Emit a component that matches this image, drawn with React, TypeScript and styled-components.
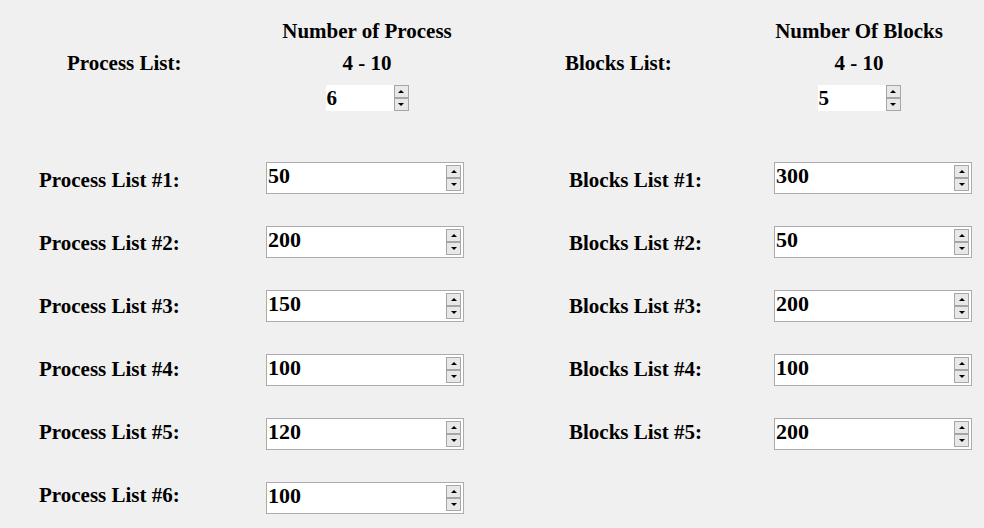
import React from "react";
import styled, { createGlobalStyle } from "styled-components";

const Global = createGlobalStyle`
  html, body { margin: 0; padding: 0; background: #f0f0f0; }
  body { font-family: "Liberation Serif", "Times New Roman", serif; color: #000; }
`;

const Page = styled.div`
  width: 984px;
  height: 528px;
  background: #f0f0f0;
  overflow: hidden;
  font-weight: bold;
  font-size: 21px;
`;

const Header = styled.div`
  display: grid;
  grid-template-columns: 200px 200px 98px 194px 200px;
  padding: 15px 0 0 67px;
`;

const HeaderLabel = styled.div`
  padding-top: 32px;
  line-height: 32px;
`;

const CountGroup = styled.div`
  display: flex;
  flex-direction: column;
  align-items: center;
`;

const CountLine = styled.div`
  line-height: 32px;
  white-space: nowrap;
`;

const SmallSpin = styled.div`
  margin-top: 6px;
  display: flex;
  width: 83px;
  height: 26px;
`;

const SmallField = styled.div`
  flex: 1;
  background: #fff;
  line-height: 26px;
  padding-left: 1px;
`;

const Buttons = styled.div`
  display: flex;
  flex-direction: column;
  width: 15px;
`;

const ArrowBtn = styled.div<{ $dir: "up" | "down" }>`
  flex: 1;
  border: 1px solid #a6a6a6;
  background: #e8e8e8;
  display: flex;
  align-items: center;
  justify-content: center;
  &::after {
    content: "";
    width: 0;
    height: 0;
    border-left: 3px solid transparent;
    border-right: 3px solid transparent;
    ${(p) =>
      p.$dir === "up"
        ? "border-bottom: 3px solid #000;"
        : "border-top: 3px solid #000;"}
  }
`;

const Rows = styled.div`
  display: grid;
  grid-template-columns: 227px 197px 106px 205px 197px;
  grid-auto-rows: 32px;
  row-gap: 32px;
  padding: 51px 0 0 39px;
`;

const RowLabel = styled.div<{ $row: number }>`
  align-self: start;
  padding-top: ${(p) => 6.3 - 1.12 * p.$row}px;
  white-space: nowrap;
`;

const Field = styled.div`
  box-sizing: border-box;
  width: 198px;
  height: 32px;
  border: 1px solid #acacac;
  background: #fff;
  display: flex;
  align-items: flex-start;
  padding: 1px 1px 0 1px;
`;

const FieldValue = styled.div`
  flex: 1;
  font-size: 22px;
  line-height: 24px;
`;

const FieldButtons = styled(Buttons)`
  height: 26px;
  margin-top: 1px;
  margin-right: 1px;
`;

const Spacer = styled.div``;

function Spin({ value, small }: { value: string; small?: boolean }) {
  if (small) {
    return (
      <SmallSpin>
        <SmallField>{value}</SmallField>
        <Buttons>
          <ArrowBtn $dir="up" />
          <ArrowBtn $dir="down" />
        </Buttons>
      </SmallSpin>
    );
  }
  return (
    <Field>
      <FieldValue>{value}</FieldValue>
      <FieldButtons>
        <ArrowBtn $dir="up" />
        <ArrowBtn $dir="down" />
      </FieldButtons>
    </Field>
  );
}

const processes = ["50", "200", "150", "100", "120", "100"];
const blocks = ["300", "50", "200", "100", "200"];

export default function App() {
  return (
    <Page>
      <Global />
      <Header>
        <HeaderLabel>Process List:</HeaderLabel>
        <CountGroup>
          <CountLine>Number of Process</CountLine>
          <CountLine>4 - 10</CountLine>
          <Spin value="6" small />
        </CountGroup>
        <Spacer />
        <HeaderLabel>Blocks List:</HeaderLabel>
        <CountGroup>
          <CountLine>Number Of Blocks</CountLine>
          <CountLine>4 - 10</CountLine>
          <Spin value="5" small />
        </CountGroup>
      </Header>
      <Rows>
        {processes.map((p, i) => (
          <React.Fragment key={i}>
            <RowLabel $row={i}>Process List #{i + 1}:</RowLabel>
            <Spin value={p} />
            <Spacer />
            {i < blocks.length ? (
              <>
                <RowLabel $row={i}>Blocks List #{i + 1}:</RowLabel>
                <Spin value={blocks[i]} />
              </>
            ) : (
              <>
                <Spacer />
                <Spacer />
              </>
            )}
          </React.Fragment>
        ))}
      </Rows>
    </Page>
  );
}
